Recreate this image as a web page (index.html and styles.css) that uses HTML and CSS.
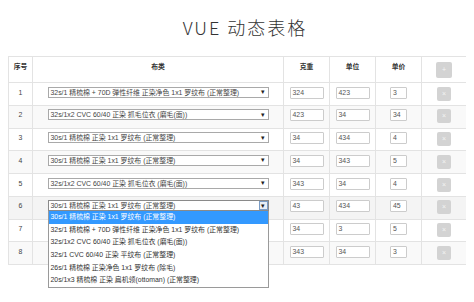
FILE: index.html
```html
<!DOCTYPE html>
<html lang="zh-CN">
<head>
<meta charset="utf-8">
<title>VUE 动态表格</title>
<link rel="stylesheet" href="styles.css">
</head>
<body>
<main class="page">
<h1 class="title">VUE 动态表格</h1>
<table class="grid">
  <colgroup>
    <col class="c-no"><col class="c-cloth"><col class="c-num"><col class="c-num"><col class="c-num"><col class="c-act">
  </colgroup>
  <thead>
    <tr>
      <th>序号</th><th>布类</th><th>克重</th><th>单位</th><th>单价</th>
      <th><span class="btn btn-add">+</span></th>
    </tr>
  </thead>
  <tbody>
    <tr>
      <td class="no">1</td>
      <td><div class="select"><span class="val">32s/1 精梳棉 + 70D 弹性纤维 正染净色 1x1 罗纹布 (正常整理)</span><span class="arrow">▾</span></div></td>
      <td><span class="inp w34">324</span></td><td><span class="inp w34">423</span></td><td><span class="inp w17">3</span></td>
      <td><span class="btn">×</span></td>
    </tr>
    <tr class="stripe">
      <td class="no">2</td>
      <td><div class="select"><span class="val">32s/1x2 CVC 60/40 正染 抓毛位衣 (磨毛(面))</span><span class="arrow">▾</span></div></td>
      <td><span class="inp w34">423</span></td><td><span class="inp w34">34</span></td><td><span class="inp w17">34</span></td>
      <td><span class="btn">×</span></td>
    </tr>
    <tr>
      <td class="no">3</td>
      <td><div class="select"><span class="val">30s/1 精梳棉 正染 1x1 罗纹布 (正常整理)</span><span class="arrow">▾</span></div></td>
      <td><span class="inp w34">34</span></td><td><span class="inp w34">434</span></td><td><span class="inp w17">4</span></td>
      <td><span class="btn">×</span></td>
    </tr>
    <tr class="stripe">
      <td class="no">4</td>
      <td><div class="select"><span class="val">30s/1 精梳棉 正染 1x1 罗纹布 (正常整理)</span><span class="arrow">▾</span></div></td>
      <td><span class="inp w34">34</span></td><td><span class="inp w34">343</span></td><td><span class="inp w17">5</span></td>
      <td><span class="btn">×</span></td>
    </tr>
    <tr>
      <td class="no">5</td>
      <td><div class="select"><span class="val">32s/1x2 CVC 60/40 正染 抓毛位衣 (磨毛(面))</span><span class="arrow">▾</span></div></td>
      <td><span class="inp w34">343</span></td><td><span class="inp w34">34</span></td><td><span class="inp w17">4</span></td>
      <td><span class="btn">×</span></td>
    </tr>
    <tr class="stripe hover">
      <td class="no">6</td>
      <td>
        <div class="select open"><span class="val">30s/1 精梳棉 正染 1x1 罗纹布 (正常整理)</span><span class="arrow boxed">▾</span>
          <ul class="dropdown">
            <li class="active">30s/1 精梳棉 正染 1x1 罗纹布 (正常整理)</li>
            <li>32s/1 精梳棉 + 70D 弹性纤维 正染净色 1x1 罗纹布 (正常整理)</li>
            <li>32s/1x2 CVC 60/40 正染 抓毛位衣 (磨毛(面))</li>
            <li>32s/1 CVC 60/40 正染 平纹布 (正常整理)</li>
            <li>26s/1 精梳棉 正染净色 1x1 罗纹布 (除毛)</li>
            <li>20s/1x3 精梳棉 正染 扁机领(ottoman) (正常整理)</li>
          </ul>
        </div>
      </td>
      <td><span class="inp w34">43</span></td><td><span class="inp w34">434</span></td><td><span class="inp w17">45</span></td>
      <td><span class="btn">×</span></td>
    </tr>
    <tr>
      <td class="no">7</td>
      <td><div class="select covered"><span class="val">32s/1 精梳棉 + 70D 弹性纤维 正染净色 1x1 罗纹布 (正常整理)</span><span class="arrow">▾</span></div></td>
      <td><span class="inp w34">34</span></td><td><span class="inp w34">3</span></td><td><span class="inp w17">5</span></td>
      <td><span class="btn">×</span></td>
    </tr>
    <tr class="stripe">
      <td class="no">8</td>
      <td><div class="select covered"><span class="val">32s/1x2 CVC 60/40 正染 抓毛位衣 (磨毛(面))</span><span class="arrow">▾</span></div></td>
      <td><span class="inp w34">343</span></td><td><span class="inp w34">34</span></td><td><span class="inp w17">3</span></td>
      <td><span class="btn">×</span></td>
    </tr>
  </tbody>
</table>
</main>
</body>
</html>
```

FILE: styles.css
```css
html {
  background: #ffffff;
  min-height: 100%;
}
body {
  margin: 8px;
  min-height: 286px;
  font-family: "Liberation Sans", "Noto Sans CJK SC", sans-serif;
  color: #333333;
}
.page {
  display: block;
  min-height: 286px;
}
.title {
  margin: 0 0 10px;
  height: 38px;
  line-height: 38px;
  padding-left: 16px;
  text-align: center;
  font-family: "Noto Sans CJK SC", sans-serif;
  font-size: 18px;
  font-weight: 300;
  letter-spacing: 2px;
  color: #333333;
}
.grid {
  width: 458px;
  border-collapse: collapse;
  table-layout: fixed;
  font-size: 6.9px;
}
.c-no { width: 24px; }
.c-cloth { width: 251px; }
.c-num { width: 46px; }
.c-act { width: 45px; }
.grid th, .grid td {
  border: 1px solid #e3e3e3;
  text-align: center;
  vertical-align: top;
  padding: 0;
}
.grid th {
  height: 26px;
  padding-top: 5px;
  box-sizing: border-box;
  font-weight: bold;
  font-size: 6.8px;
  line-height: 10px;
  color: #333333;
}
.grid tbody tr {
  height: 22.75px;
}
.grid td {
  padding-top: 3.5px;
  box-sizing: border-box;
}
.grid tr.stripe td {
  background: #f9f9f9;
}
.grid tr.hover td {
  background: #f4f4f4;
}
.grid td.no {
  line-height: 12px;
  color: #444444;
}
.select {
  position: relative;
  width: 221px;
  height: 11px;
  margin: 0 auto;
  box-sizing: border-box;
  border: 1px solid #a9a9a9;
  background: #ffffff;
  display: flex;
  align-items: center;
  text-align: left;
  color: #444444;
}
.select.covered {
  visibility: hidden;
}
.select.open {
  z-index: 20;
  border-color: #8a8a8a;
}
.select .val {
  flex: 1;
  padding-left: 2px;
  line-height: 9px;
  white-space: nowrap;
  overflow: hidden;
}
.select .arrow {
  width: 8px;
  height: 8px;
  margin-right: 1px;
  font-size: 7px;
  line-height: 8px;
  text-align: center;
  color: #222222;
}
.select .arrow.boxed {
  border: 1px solid #7a9cc6;
  background: #e8eef6;
  box-sizing: border-box;
  width: 9px;
  height: 9px;
  line-height: 7px;
  margin-right: 0;
}
.dropdown {
  position: absolute;
  top: 10px;
  left: -1px;
  width: 221px;
  height: 77px;
  margin: 0;
  padding: 0;
  list-style: none;
  background: #ffffff;
  border: 1px solid #9a9a9a;
  border-top: none;
  box-sizing: border-box;
  z-index: 30;
  visibility: visible;
}
.dropdown li {
  display: block;
  height: 12.6px;
  line-height: 12.6px;
  padding-left: 2px;
  white-space: nowrap;
  color: #333333;
  background: #ffffff;
}
.dropdown li.active {
  background: #3399ff;
  color: #ffffff;
}
.inp {
  display: block;
  margin: 0 auto;
  height: 12px;
  box-sizing: border-box;
  border: 1px solid #cccccc;
  border-radius: 1px;
  background: #ffffff;
  text-align: left;
  padding-left: 2px;
  line-height: 10px;
  color: #555555;
}
.w34 { width: 34px; }
.w17 { width: 17px; }
.btn {
  display: block;
  margin: 0 auto;
  width: 14px;
  height: 14px;
  border-radius: 2px;
  background: #d3d3d3;
  color: #f4f4f4;
  font-size: 7px;
  line-height: 14px;
  text-align: center;
  font-weight: normal;
}
.btn-add {
  width: 16px;
  height: 16px;
  line-height: 16px;
}
```
